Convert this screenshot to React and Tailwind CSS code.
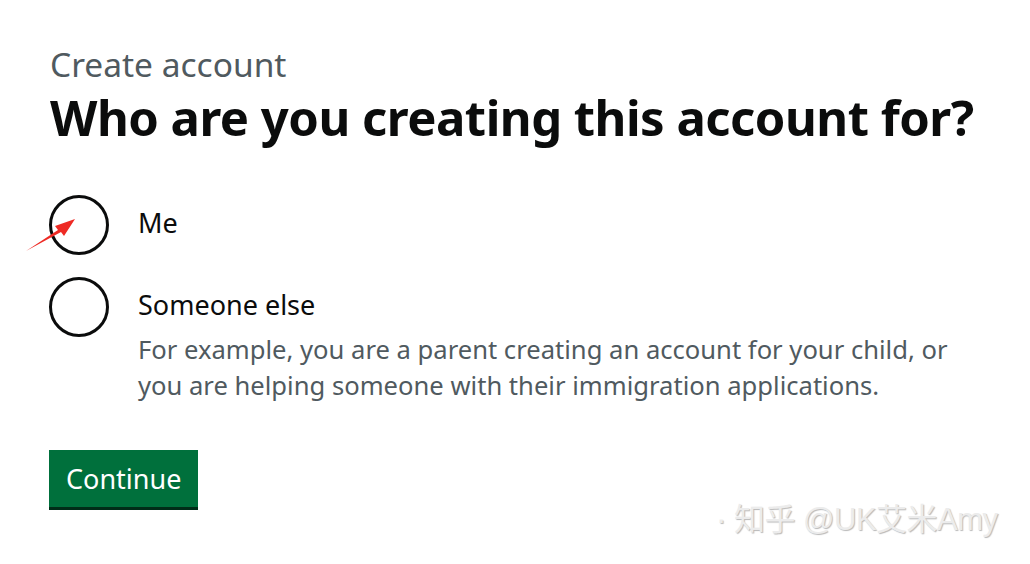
import React from "react";

const Radio = ({ label, children }) => (
  <div className="flex items-start">
    <div className="w-[60px] h-[60px] rounded-full border-[3px] border-[#0b0c0c] shrink-0 mt-[-5px] ml-[-1px]" />
    <div className="ml-[29px] pt-[3px]">
      <div className="text-[27px] leading-[40px] text-[#0b0c0c]">{label}</div>
      {children}
    </div>
  </div>
);

const App = () => {
  return (
    <div
      className="relative w-[1030px] h-[564px] bg-white overflow-hidden"
      style={{ fontFamily: '"Noto Sans", Arial, sans-serif' }}
    >
      <div className="pl-[50px] pt-[42px]">
        {/* caption + question */}
        <div className="text-[33.5px] leading-[44px] text-[#505a5f]">Create account</div>
        <h1 className="text-[49px] leading-[62px] font-bold text-[#0b0c0c] tracking-[-0.5px]">
          Who are you creating this account for?
        </h1>

        <div className="mt-[52px] flex flex-col gap-[27px]">
          <Radio label="Me" />
          <Radio label="Someone else">
            <p className="mt-[7px] text-[25.6px] leading-[36px] text-[#505a5f]">
              For example, you are a parent creating an account for your child, or
              <br />
              you are helping someone with their immigration applications.
            </p>
          </Radio>
        </div>

        <button className="mt-[46px] ml-[-1px] bg-[#00703c] text-white text-[27px] leading-[36px] px-[17px] pt-[11px] pb-[10px] shadow-[0_3px_0_#002d18]">
          Continue
        </button>
      </div>

      {/* annotation arrow */}
      <svg className="absolute left-[24px] top-[215px]" width="56" height="40" viewBox="0 0 56 40">
        <path d="M2 36 L34 15 L31 11 L51 4 L40 21 L37 17 Z" fill="#ee2a24" />
      </svg>

      {/* watermark */}
      <div
        className="absolute left-[716px] top-[497px] text-[31px] text-[#ececec] tracking-[-0.5px]"
        style={{ fontFamily: '"Liberation Sans", "Noto Sans CJK SC", sans-serif', textShadow: "1px 1px 1px #b9b9b9" }}
      >
        · 知乎 @UK艾米Amy
      </div>
    </div>
  );
};

export default App;
